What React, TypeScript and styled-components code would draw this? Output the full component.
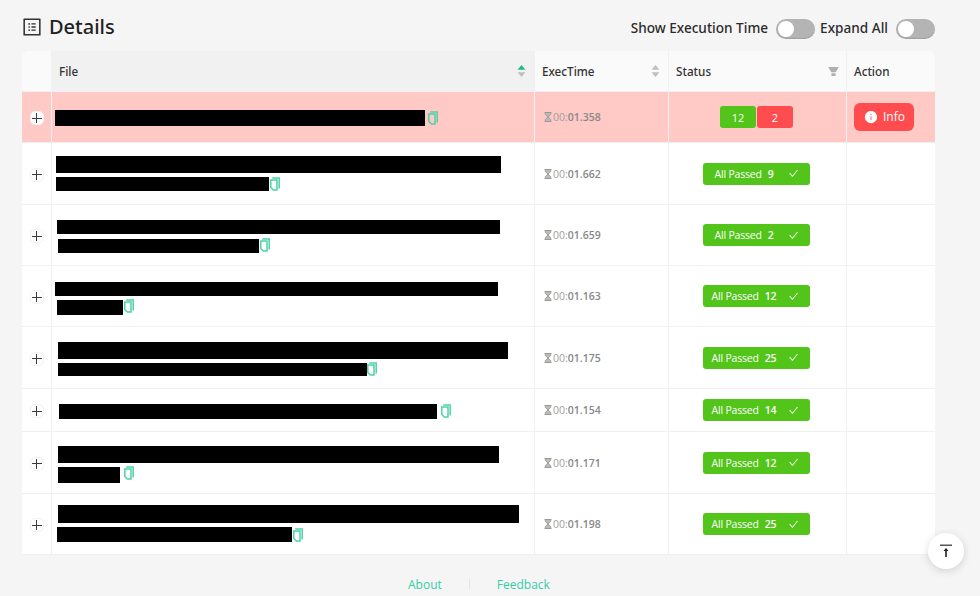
import styled, { createGlobalStyle } from "styled-components";
import {
  AiFillCaretDown,
  AiFillCaretUp,
  AiFillFilter,
  AiFillInfoCircle,
  AiOutlineCheck,
  AiOutlineProfile,
} from "react-icons/ai";

const GlobalStyle = createGlobalStyle`
  html, body {
    margin: 0;
    padding: 0;
    height: 596px;
    overflow: hidden;
    background: #f5f5f5;
    font-family: "Open Sans", "Noto Sans", sans-serif;
    color: #333;
  }
`;

const COLUMNS = "30px 483px 134px 178px 88px";

const Page = styled.div`
  width: 980px;
  padding: 0 45px 0 22px;
  box-sizing: border-box;
`;
const Header = styled.header`
  display: flex;
  align-items: center;
  justify-content: space-between;
  height: 51px;
  padding-top: 3px;
  box-sizing: border-box;
`;
const Title = styled.h2`
  display: flex;
  align-items: center;
  gap: 6px;
  margin: -2px 0 0 -1px;
  font-family: "Noto Sans", sans-serif;
  font-size: 20px;
  font-weight: 500;
  color: #1f1f1f;
  svg {
    font-size: 22px;
    color: #333;
    margin-top: 1px;
  }
`;
const Controls = styled.div`
  display: flex;
  align-items: center;
  margin-top: 4px;
  font-family: "Noto Sans", sans-serif;
  font-size: 13.6px;
  font-weight: 500;
  color: #2b2b2b;
`;
const ControlLabel = styled.span`
  margin: -4px 8px 0 0;
`;
const Toggle = styled.span`
  width: 39px;
  height: 20px;
  margin-right: 5px;
  border-radius: 10px;
  background: #b4b4b4;
  box-shadow: inset 0 -1px 1px rgba(0, 0, 0, 0.12);
  padding: 2px;
  box-sizing: border-box;
  &:last-child {
    margin-right: 0;
  }
  &::before {
    content: "";
    display: block;
    width: 16px;
    height: 16px;
    border-radius: 50%;
    background: #fff;
  }
`;
const Table = styled.div`
  width: 913px;
  border-radius: 8px 8px 0 0;
  overflow: hidden;
  background: #fff;
`;
const Row = styled.div<{ $height: number; $failed?: boolean }>`
  display: grid;
  grid-template-columns: ${COLUMNS};
  height: ${(p) => p.$height}px;
  background: ${(p) => (p.$failed ? "#ffc9c5" : "#fff")};
`;
const Cell = styled.div`
  display: flex;
  align-items: center;
  min-width: 0;
  border-right: 1px solid #f0f0f0;
  border-bottom: 1px solid #f0f0f0;
  box-sizing: border-box;
  &:last-child {
    border-right: none;
  }
`;
const HeadCell = styled(Cell)<{ $sorted?: boolean }>`
  justify-content: space-between;
  padding: 0 7px;
  background: ${(p) => (p.$sorted ? "#f1f1f1" : "#fafafa")};
  font-family: "Noto Sans", sans-serif;
  font-size: 11.7px;
  font-weight: 500;
  color: #333;
`;
const SortIcon = styled.span<{ $active?: boolean }>`
  display: flex;
  flex-direction: column;
  font-size: 11px;
  color: #bfbfbf;
  svg {
    display: block;
    margin: -2px 0;
  }
  svg:first-child {
    color: ${(p) => (p.$active ? "#1abc8c" : "#bfbfbf")};
  }
`;
const FilterIcon = styled.span`
  display: flex;
  margin-right: -1px;
  font-size: 13px;
  color: #b0b0b0;
`;
const ExpandCell = styled(Cell)`
  justify-content: center;
`;
const ExpandButton = styled.span`
  position: relative;
  width: 14px;
  height: 14px;
  margin-top: 2px;
  border: 1px solid #f2f2f2;
  box-sizing: border-box;
  border-radius: 5px;
  background: #fff;
  &::before,
  &::after {
    content: "";
    position: absolute;
    background: #3c3c3c;
  }
  &::before {
    left: 1px;
    right: 1px;
    top: 5.5px;
    height: 1px;
  }
  &::after {
    top: 1px;
    bottom: 1px;
    left: 5.5px;
    width: 1px;
  }
`;
const FileCell = styled(Cell)`
  flex-direction: column;
  align-items: flex-start;
`;
const Line = styled.div`
  display: flex;
  align-items: flex-start;
`;
const Redacted = styled.span<{ $left: number; $width: number; $height: number; $top: number }>`
  display: block;
  margin-left: ${(p) => p.$left}px;
  margin-top: ${(p) => p.$top}px;
  width: ${(p) => p.$width}px;
  height: ${(p) => p.$height}px;
  background: #000;
`;
const CopyGlyph = styled.svg<{ $top: number; $left: number }>`
  width: 10px;
  height: 14px;
  margin-left: ${(p) => p.$left}px;
  margin-top: ${(p) => p.$top}px;
  fill: none;
  stroke: #4dd2a7;
  stroke-width: 1.5;
`;
const TimeCell = styled(Cell)`
  padding-left: 9px;
  font-size: 10.5px;
  color: #a0a0a0;
  gap: 1px;
  b {
    color: #888;
    font-weight: 600;
  }
`;
const Hourglass = styled.svg`
  width: 8px;
  height: 10px;
  fill: #bbb;
  stroke: #999;
  stroke-width: 0.9;
`;
const StatusCell = styled(Cell)`
  justify-content: center;
  gap: 1px;
  padding-right: 2px;
`;
const Badge = styled.span<{ $failed?: boolean; $wide?: boolean }>`
  display: flex;
  align-items: center;
  justify-content: center;
  width: ${(p) => (p.$wide ? "107px" : "36px")};
  height: 22px;
  box-sizing: border-box;
  border-radius: 3px;
  background: ${(p) => (p.$failed ? "#ff4d4f" : "#52c41a")};
  color: #fff;
  font-size: ${(p) => (p.$wide ? "10.5px" : "11px")};
`;
const BadgeText = styled.span`
  flex: 1;
  display: flex;
  justify-content: center;
  gap: 6px;
  letter-spacing: -0.2px;
`;
const BadgeCount = styled.b`
  font-weight: 600;
`;
const BadgeCheck = styled.span`
  display: flex;
  width: 25px;
  font-size: 11px;
  padding-left: 3px;
  box-sizing: border-box;
`;
const ActionCell = styled(Cell)`
  padding-left: 7px;
`;
const InfoButton = styled.span`
  display: flex;
  align-items: center;
  gap: 5px;
  width: 60px;
  height: 28px;
  margin-top: -1px;
  padding-left: 10px;
  box-sizing: border-box;
  border-radius: 6px;
  background: #ff4d4f;
  color: #fff;
  font-size: 12px;
  svg {
    font-size: 14px;
  }
`;
const Footer = styled.footer`
  display: flex;
  align-items: center;
  height: 30px;
  margin-top: 14px;
  padding-left: 386px;
  font-size: 12px;
  color: #35cda6;
`;
const Divider = styled.span`
  width: 1px;
  height: 10px;
  margin: 0 27px;
  background: #e4e4e4;
`;
const BackTop = styled.span`
  position: fixed;
  left: 928px;
  top: 533px;
  width: 36px;
  height: 36px;
  display: flex;
  align-items: center;
  justify-content: center;
  border-radius: 50%;
  background: #fff;
  box-shadow: 0 2px 8px rgba(0, 0, 0, 0.15);
`;
const BackTopGlyph = styled.svg`
  width: 14px;
  height: 14px;
`;

type Bar = { left: number; width: number; height: number; top: number };
type Result = {
  height: number;
  bars: Bar[];
  copyLeft: number;
  copyTop: number;
  time: string;
  passed: number;
  failed?: number;
};

const results: Result[] = [
  {
    height: 51,
    bars: [{ left: 3, width: 370, height: 16, top: 18 }],
    copyLeft: 3,
    copyTop: 19,
    time: "01.358",
    passed: 12,
    failed: 2,
  },
  {
    height: 62,
    bars: [
      { left: 4, width: 445, height: 17, top: 13 },
      { left: 4, width: 213, height: 14, top: 4 },
    ],
    copyLeft: 1,
    copyTop: 4,
    time: "01.662",
    passed: 9,
  },
  {
    height: 61,
    bars: [
      { left: 5, width: 443, height: 14, top: 15 },
      { left: 6, width: 201, height: 14, top: 5 },
    ],
    copyLeft: 1,
    copyTop: 4,
    time: "01.659",
    passed: 2,
  },
  {
    height: 61,
    bars: [
      { left: 3, width: 443, height: 14, top: 16 },
      { left: 5, width: 66, height: 15, top: 4 },
    ],
    copyLeft: 1,
    copyTop: 3,
    time: "01.163",
    passed: 12,
  },
  {
    height: 62,
    bars: [
      { left: 6, width: 450, height: 17, top: 15 },
      { left: 6, width: 309, height: 13, top: 4 },
    ],
    copyLeft: 0,
    copyTop: 3,
    time: "01.175",
    passed: 25,
  },
  {
    height: 43,
    bars: [{ left: 7, width: 378, height: 15, top: 15 }],
    copyLeft: 4,
    copyTop: 15,
    time: "01.154",
    passed: 14,
  },
  {
    height: 62,
    bars: [
      { left: 6, width: 441, height: 17, top: 14 },
      { left: 6, width: 62, height: 16, top: 4 },
    ],
    copyLeft: 4,
    copyTop: 3,
    time: "01.171",
    passed: 12,
  },
  {
    height: 61,
    bars: [
      { left: 6, width: 461, height: 18, top: 11 },
      { left: 5, width: 235, height: 15, top: 4 },
    ],
    copyLeft: 1,
    copyTop: 5,
    time: "01.198",
    passed: 25,
  },
];

function CopyIcon({ left, top }: { left: number; top: number }) {
  return (
    <CopyGlyph viewBox="0 0 10 14" $left={left} $top={top}>
      <path d="M2.200 1h7v10.500" />
      <path d="M0.800 3h6.200v10H3.300L0.800 10.500z" />
    </CopyGlyph>
  );
}

function ResultRow({ result }: { result: Result }) {
  const { bars, copyLeft, copyTop, failed, height, passed, time } = result;
  return (
    <Row $height={height} $failed={failed !== undefined}>
      <ExpandCell>
        <ExpandButton />
      </ExpandCell>
      <FileCell>
        {bars.map((bar, i) => (
          <Line key={i}>
            <Redacted $left={bar.left} $width={bar.width} $height={bar.height} $top={bar.top} />
            {i === bars.length - 1 && <CopyIcon left={copyLeft} top={copyTop} />}
          </Line>
        ))}
      </FileCell>
      <TimeCell>
        <Hourglass viewBox="0 0 8 10">
          <path d="M0.500 0.500h7M0.500 9.500h7M1.300 0.500v2L4 5 1.300 7.500v2h5.400v-2L4 5l2.700-2.500v-2z" />
        </Hourglass>
        <span>
          00:<b>{time}</b>
        </span>
      </TimeCell>
      <StatusCell>
        {failed !== undefined ? (
          <>
            <Badge>{passed}</Badge>
            <Badge $failed>{failed}</Badge>
          </>
        ) : (
          <Badge $wide>
            <BadgeText>
              All Passed
              <BadgeCount>{passed}</BadgeCount>
            </BadgeText>
            <BadgeCheck>
              <AiOutlineCheck />
            </BadgeCheck>
          </Badge>
        )}
      </StatusCell>
      <ActionCell>
        {failed !== undefined && (
          <InfoButton>
            <AiFillInfoCircle />
            Info
          </InfoButton>
        )}
      </ActionCell>
    </Row>
  );
}

export default function App() {
  return (
    <Page>
      <GlobalStyle />
      <Header>
        <Title>
          <AiOutlineProfile />
          Details
        </Title>
        <Controls>
          <ControlLabel>Show Execution Time</ControlLabel>
          <Toggle />
          <ControlLabel>Expand All</ControlLabel>
          <Toggle />
        </Controls>
      </Header>
      <Table>
        <Row $height={41}>
          <HeadCell />
          <HeadCell $sorted>
            File
            <SortIcon $active>
              <AiFillCaretUp />
              <AiFillCaretDown />
            </SortIcon>
          </HeadCell>
          <HeadCell>
            ExecTime
            <SortIcon>
              <AiFillCaretUp />
              <AiFillCaretDown />
            </SortIcon>
          </HeadCell>
          <HeadCell>
            Status
            <FilterIcon>
              <AiFillFilter />
            </FilterIcon>
          </HeadCell>
          <HeadCell>Action</HeadCell>
        </Row>
        {results.map((result, i) => (
          <ResultRow key={i} result={result} />
        ))}
      </Table>
      <Footer>
        About
        <Divider />
        Feedback
      </Footer>
      <BackTop>
        <BackTopGlyph viewBox="0 0 14 14">
          <rect x="1" y="0.500" width="12" height="1.500" fill="#555" />
          <path d="M7 4l2.500 3h-1.700v6H6.200V7H4.500z" fill="#222" />
        </BackTopGlyph>
      </BackTop>
    </Page>
  );
}
